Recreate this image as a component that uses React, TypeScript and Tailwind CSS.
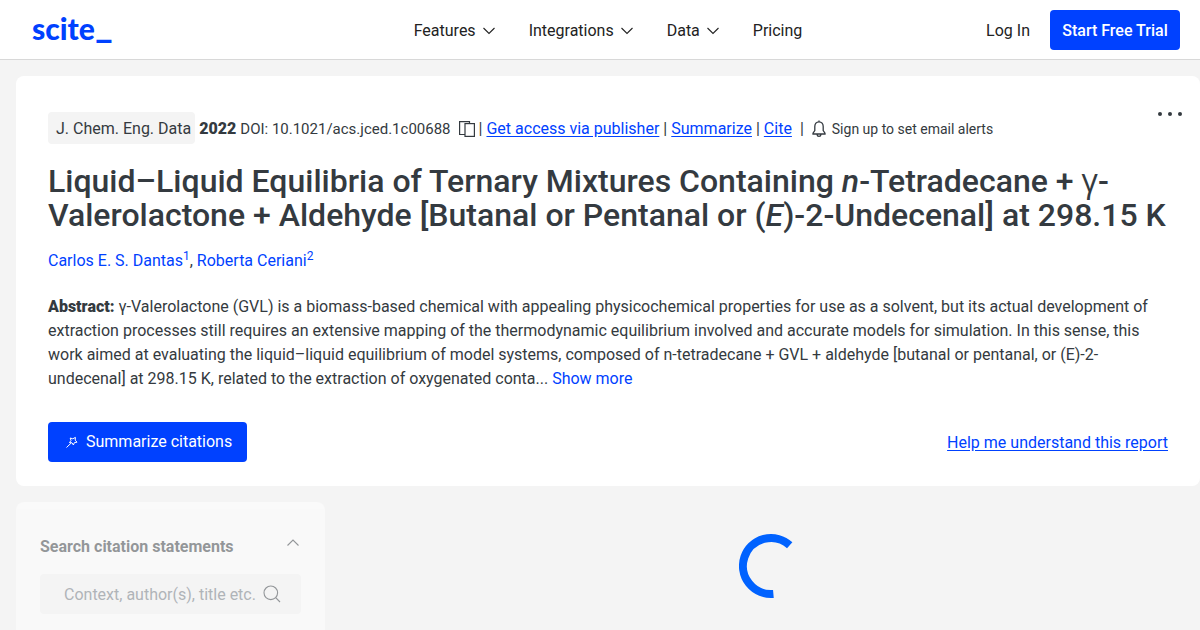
import React from "react";

const NAV = [
  { label: "Features", menu: true },
  { label: "Integrations", menu: true },
  { label: "Data", menu: true },
  { label: "Pricing", menu: false },
];

function Chevron({ up = false }: { up?: boolean }) {
  return (
    <svg width="12" height="8" viewBox="0 0 12 8" fill="none" stroke="currentColor" strokeWidth="1.1" aria-hidden="true">
      <path d={up ? "M0.5 6.5L6 1L11.5 6.5" : "M0.5 1L6 6.5L11.5 1"} />
    </svg>
  );
}

function CopyIcon() {
  return (
    <svg width="16" height="16" viewBox="0 0 16 16" fill="none" stroke="currentColor" strokeWidth="1.2" aria-hidden="true">
      <path d="M6 13.5H0.6V0.6H10.5V2.5" />
      <rect x="6" y="2.6" width="9.4" height="12.8" />
    </svg>
  );
}

function BellIcon() {
  return (
    <svg width="14" height="18" viewBox="0 0 14 18" fill="none" stroke="currentColor" strokeWidth="1.3" aria-hidden="true">
      <path d="M7 1.8C4.3 1.8 2.8 3.9 2.8 6.6V10.6L1 13.2V14H13V13.2L11.2 10.6V6.6C11.2 3.9 9.7 1.8 7 1.8ZM7 0.4V1.8M5 14.4C5.2 17 8.8 17 9 14.4" />
    </svg>
  );
}

function WandIcon() {
  return (
    <svg width="12" height="12" viewBox="0 0 12 12" fill="none" stroke="currentColor" strokeWidth="1" aria-hidden="true">
      <path d="M0.5 11.5L5 7.2M4.2 2L6.8 2.8L9.4 1.4L9.2 4.2L11 6.2L8.4 6.6L7.4 9L6 6.8L3.4 6.6L5 4.6Z" />
    </svg>
  );
}

function SearchIcon() {
  return (
    <svg width="18" height="18" viewBox="0 0 18 18" className="shrink-0" fill="none" stroke="currentColor" strokeWidth="1.1" aria-hidden="true">
      <circle cx="7.8" cy="7.8" r="6.8" />
      <path d="M12.7 12.7L17 17" />
    </svg>
  );
}

function Spinner() {
  return (
    <svg width="64" height="66" viewBox="0 0 64 66" fill="none" stroke="#0062ff" strokeWidth="8" role="img" aria-label="Loading">
      <path d="M50.7 12.2A28 28 0 1 0 34.4 60.9" />
    </svg>
  );
}

const link = "text-[#0041ff] underline underline-offset-2";

export default function App() {
  return (
    <div className="min-h-screen overflow-hidden bg-[#f4f4f4] font-['Roboto',sans-serif] text-base text-[#343a40]">
      <header className="grid h-[60px] grid-cols-[1fr_auto_1fr] items-center border-b border-[#d8d8d8] bg-white pr-5 pl-8 text-[#222]">
        <a href="#home" className="flex items-start pb-1 font-['Lato',sans-serif] text-[30px] leading-8 font-black text-[#0041ff]">
          <span>scite</span>
          <span className="-mt-1.5 text-[38px]">_</span>
        </a>
        <nav className="flex gap-[34px] pt-0.5 pl-1">
          {NAV.map((item) =>
            item.menu ? (
              <button key={item.label} className="flex items-center gap-[7px]">
                {item.label}
                <Chevron />
              </button>
            ) : (
              <a key={item.label} href="#pricing">
                {item.label}
              </a>
            ),
          )}
        </nav>
        <div className="flex items-center justify-end gap-5">
          <a href="#login" className="pt-0.5">Log In</a>
          <a href="#trial" className="flex h-10 w-[130px] items-center justify-center rounded bg-[#0041ff] pt-0.5 font-medium text-white">
            Start Free Trial
          </a>
        </div>
      </header>

      <main className="pt-4 pl-4">
        <section className="rounded-lg bg-white px-8 pt-9 pb-6">
          <div className="flex items-start justify-between">
            <div className="flex items-center gap-1 whitespace-nowrap">
              <span className="flex h-8 items-center rounded bg-[#f4f4f4] pt-0.5 pr-1 pl-2">J. Chem. Eng. Data</span>
              <div className="flex items-center gap-1 pt-0.5">
                <strong className="font-black">2022</strong>
                <span className="text-[15px]">DOI: 10.1021/acs.jced.1c00688</span>
                <button aria-label="Copy DOI" className="ml-1">
                  <CopyIcon />
                </button>
                <span>|</span>
                <a href="#publisher" className={link}>Get access via publisher</a>
                <span>|</span>
                <a href="#summarize" className={link}>Summarize</a>
                <span>|</span>
                <a href="#cite" className={link}>Cite</a>
                <span className="mx-1">|</span>
                <button className="flex items-center gap-1.5 text-sm">
                  <BellIcon />
                  Sign up to set email alerts
                </button>
              </div>
            </div>
            <button aria-label="More options" className="-mr-4 flex text-[#343a40]">
              <svg width="28" height="4" viewBox="0 0 28 4" fill="currentColor" aria-hidden="true">
                <circle cx="4" cy="2" r="2" />
                <circle cx="14" cy="2" r="2" />
                <circle cx="24" cy="2" r="2" />
              </svg>
            </button>
          </div>

          <h1 className="mt-5 text-[32px] leading-[34px] font-medium">
            Liquid–Liquid Equilibria of Ternary Mixtures Containing <i>n</i>-Tetradecane +{" "}
            <span className="font-['Open_Sans',sans-serif] leading-none font-normal">γ</span>-Valerolactone + Aldehyde
            [Butanal or Pentanal or (<i>E</i>)-2-Undecenal] at 298.15 K
          </h1>

          <p className="mt-4 leading-[26px]">
            <a href="#dantas" className="text-[#0041ff]">Carlos E. S. Dantas<sup>1</sup></a>,{" "}
            <a href="#ceriani" className="text-[#0041ff]">Roberta Ceriani<sup>2</sup></a>
          </p>

          <p className="mt-[21px] leading-6">
            <strong className="font-black">Abstract:</strong> γ-Valerolactone (GVL) is a biomass-based chemical with
            appealing physicochemical properties for use as a solvent, but its actual development of extraction
            processes still requires an extensive mapping of the thermodynamic equilibrium involved and accurate models
            for simulation. In this sense, this work aimed at evaluating the liquid–liquid equilibrium of model systems,
            composed of n-tetradecane + GVL + aldehyde [butanal or pentanal, or (E)-2-undecenal] at 298.15 K, related to
            the extraction of oxygenated conta... <button className="text-[#0041ff]">Show more</button>
          </p>

          <div className="mt-[31px] flex items-center justify-between">
            <button className="flex h-10 items-center gap-2 rounded bg-[#0041ff] pr-[15px] pl-[18px] text-white">
              <WandIcon />
              Summarize citations
            </button>
            <a href="#help" className={`${link} pt-0.5`}>Help me understand this report</a>
          </div>
        </section>

        <div className="mt-4 flex gap-4">
          <aside className="w-[309px] rounded-lg bg-white px-6 pt-8 pb-8 opacity-50">
            <div className="flex items-center justify-between">
              <label htmlFor="q" className="pt-px leading-6 font-bold">Search citation statements</label>
              <button aria-label="Collapse" className="mr-0.5 mb-2"><Chevron up /></button>
            </div>
            <div className="mt-[15px] flex h-10 items-center rounded bg-[#f4f4f4] pr-5 pl-6">
              <input
                id="q"
                placeholder="Context, author(s), title etc."
                className="min-w-0 flex-1 bg-transparent pt-0.5 outline-none placeholder:text-[#6c757d]"
              />
              <SearchIcon />
            </div>
          </aside>
          <div className="flex flex-1 justify-center pt-[31px]">
            <Spinner />
          </div>
        </div>
      </main>
    </div>
  );
}
